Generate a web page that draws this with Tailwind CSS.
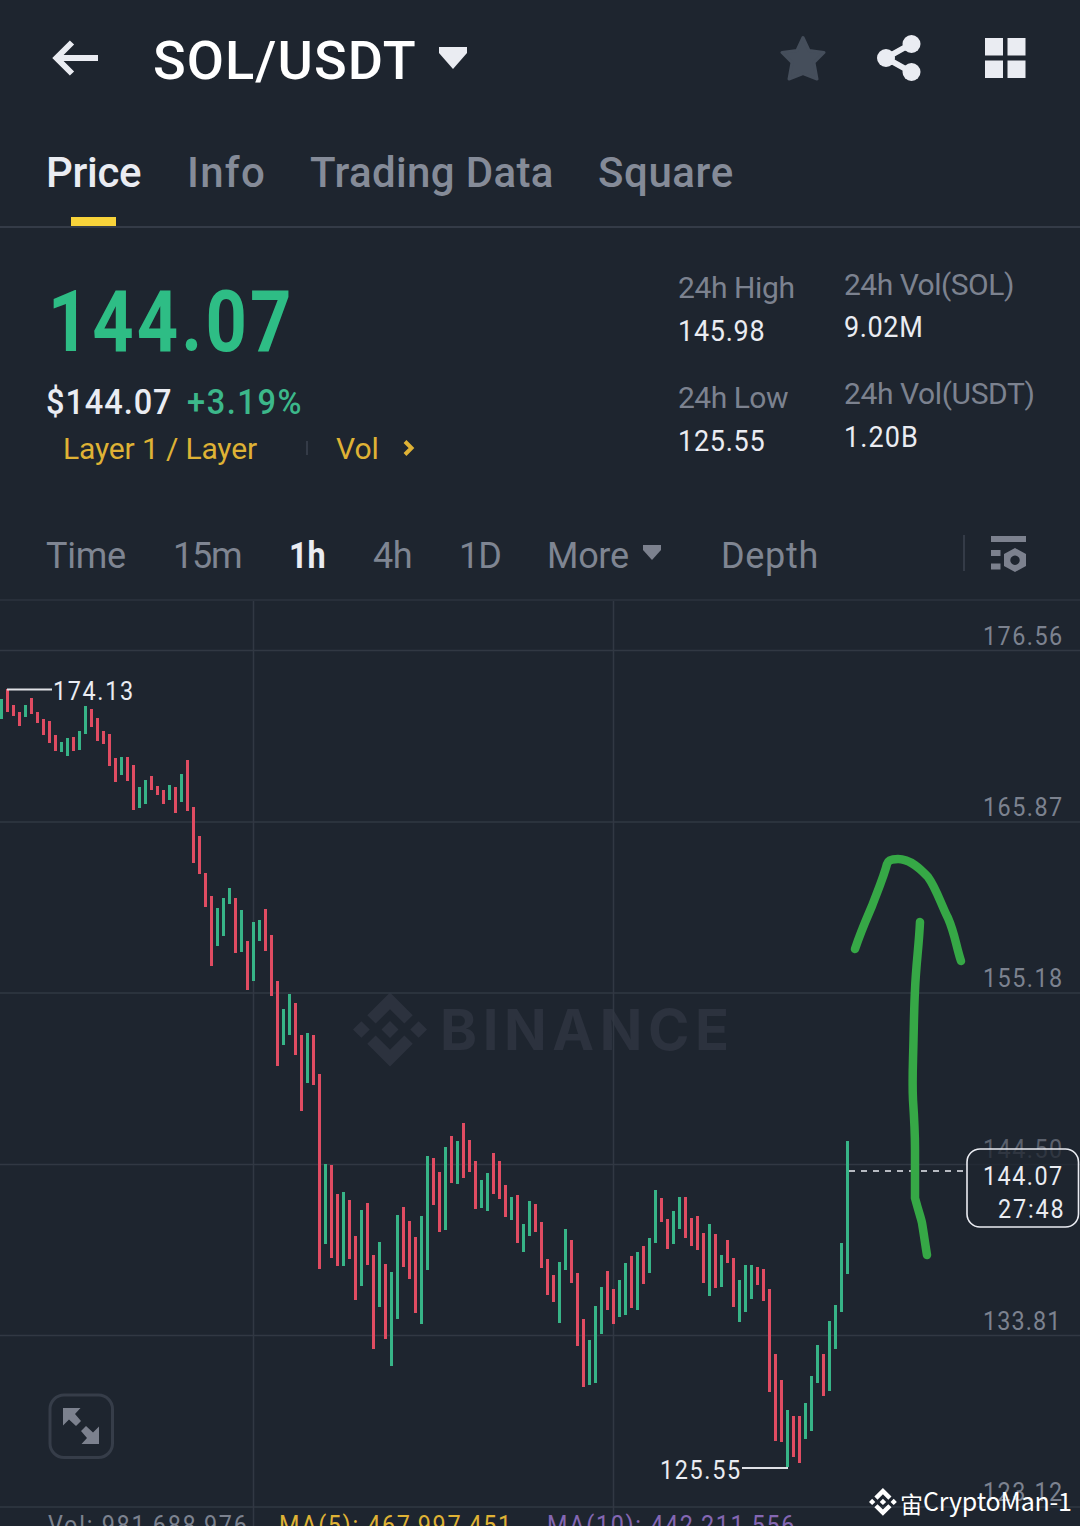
<!DOCTYPE html>
<html lang="en">
<head>
    <meta charset="UTF-8">
    <meta name="viewport" content="width=device-width, initial-scale=1.0">
    <title>SOL/USDT</title>
    <script src="https://cdn.jsdelivr.net/npm/@tailwindcss/browser@4"></script>
</head>
<body class="bg-[#1e252f] font-['Roboto','Noto_Sans_CJK_SC',sans-serif] text-[#eaecf2]">
    <div class="w-[1080px] h-[1526px] overflow-hidden flex flex-col whitespace-nowrap">
        <header class="h-[120px] shrink-0 flex items-center pb-1 pl-[52px] pr-[54px]">
            <svg class="w-[46px] h-9 shrink-0" viewBox="0 0 46 36" fill="none" stroke="#eaecf2" stroke-width="6">
                <path d="M4 18H46M20 2.5L4.500 18L20 33.500"/>
            </svg>
            <h1 class="ml-[55px] w-[286px] pt-[5px] text-[54px] leading-[60px] font-medium text-white tracking-[1.100px]">SOL/USDT</h1>
            <svg class="w-7 h-[22px] shrink-0" viewBox="0 0 28 22" fill="#eaecf2"><path d="M0 0H28V6L14 22L0 6Z"/></svg>
            <div class="ml-auto flex items-center">
                <svg class="w-[46px] h-[46px]" viewBox="0 0 46 46" fill="#454e5b" stroke="#454e5b" stroke-width="3" stroke-linejoin="round">
                    <path d="M23 2.500L29 15.500L44 17.500L34 27.500L37 44L23 38.500L9 44L12 27.500L2 17.500L17 15.500Z"/>
                </svg>
                <svg class="ml-[51px] w-11 h-[46px]" viewBox="0 0 44 46" fill="#eaecf2">
                    <path d="M34 9L9 23L34 37" fill="none" stroke="#eaecf2" stroke-width="6"/>
                    <circle cx="9" cy="23" r="9"/><circle cx="34.500" cy="9" r="9"/><circle cx="34.500" cy="37" r="9"/>
                </svg>
                <svg class="ml-16 w-[41px] h-10" viewBox="0 0 41 40" fill="#eaecf2">
                    <path d="M0 0H18V17.500H0ZM22.500 0H40.500V17.500H22.500ZM0 22.500H18V40H0ZM22.500 22.500H40.500V40H22.500Z"/>
                </svg>
            </div>
        </header>

        <nav class="h-[108px] shrink-0 flex border-b-2 border-[#343b47] pl-[46px] text-[42px] leading-[106px] font-medium text-[#858b98]">
            <div class="relative w-[141px] text-[#eaecf2] tracking-[-0.3px]">Price
                <span class="absolute left-[25px] bottom-0 w-[45px] h-[9px] bg-[#f8d33a]"></span>
            </div>
            <div class="w-[123px] tracking-[1.300px]">Info</div>
            <div class="w-[288px] tracking-[0.350px]">Trading Data</div>
            <div class="tracking-[0.600px]">Square</div>
        </nav>

        <section class="h-[282px] shrink-0 flex pl-[46px]">
            <div class="w-[632px] pt-[48px]">
                <div class="h-[92px] w-fit origin-left scale-x-[.84] text-[86px] leading-[92px] font-bold text-[#2ebd85] pl-0.5 tracking-[3.700px]">144.07</div>
                <div class="mt-[11px] h-[46px] flex text-[35px] leading-[48px] font-medium">
                    <span class="w-[141px]"><span class="inline-block origin-left scale-x-[.93] tracking-[1px]">$144.07</span></span>
                    <span class="inline-block origin-left scale-x-[.93] tracking-[1.700px] text-[#3cb88a]">+3.19%</span>
                </div>
                <div class="h-[46px] flex items-center text-[30px] text-[#dfb235] pl-[17px]">
                    <span class="w-[243px] tracking-[-0.150px]">Layer 1 / Layer</span>
                    <span class="w-0.5 h-[14px] bg-[#343b47]"></span>
                    <span class="ml-[28px] w-[67px]">Vol</span>
                    <svg class="w-3 h-4" viewBox="0 0 12 16" fill="none" stroke="#dfb235" stroke-width="4"><path d="M2 1.500L8.500 8L2 14.500"/></svg>
                </div>
            </div>
            <dl class="w-[166px] pt-[41px] text-[30px] leading-[38px]">
                <dt class="text-[#7c828f] tracking-[-0.400px]">24h High</dt>
                <dd class="mt-[5px] w-fit origin-left scale-x-90 tracking-[0.800px]">145.98</dd>
                <dt class="mt-[29px] text-[#7c828f] tracking-[-0.500px]">24h Low</dt>
                <dd class="mt-[5px] w-fit origin-left scale-x-90 tracking-[0.800px]">125.55</dd>
            </dl>
            <dl class="pt-[38px] text-[30px] leading-[38px]">
                <dt class="text-[#7c828f] tracking-[-0.500px]">24h Vol(SOL)</dt>
                <dd class="mt-[4px] w-fit origin-left scale-x-90 tracking-[0.700px]">9.02M</dd>
                <dt class="mt-[29px] text-[#7c828f] tracking-[-0.400px]">24h Vol(USDT)</dt>
                <dd class="mt-[5px] w-fit origin-left scale-x-90 tracking-[1.200px]">1.20B</dd>
            </dl>
        </section>

        <div class="h-[91px] shrink-0 flex items-center border-b-2 border-[#282f3a] pl-[46px] text-[36px] text-[#7f8592]">
            <span class="w-[127px] pt-[3px] tracking-[-0.300px]">Time</span>
            <span class="w-[116px] pt-[3px] tracking-[-1.200px]">15m</span>
            <span class="w-[84px] pt-[3px] font-bold text-[#eaecf2]"><span class="inline-block origin-left scale-x-90">1h</span></span>
            <span class="w-[86px] pt-[3px] tracking-[-0.500px]">4h</span>
            <span class="w-[88px] pt-[3px] tracking-[-1px]">1D</span>
            <span class="w-[96px] pt-[3px] tracking-[-0.300px]">More</span>
            <svg class="w-[18px] h-[15px] mb-1" viewBox="0 0 18 15" fill="#7c818e"><path d="M0 0H18V5L9 15L0 5Z"/></svg>
            <span class="ml-[60px] w-[242px] pt-[3px] tracking-[0.700px]">Depth</span>
            <span class="w-0.5 h-9 mb-1 bg-[#343b47]"></span>
            <svg class="ml-[26px] w-9 h-9 mb-0.5" viewBox="0 0 36 36" fill="#7c818e">
                <path d="M0 0H35V6H0ZM0 14H9.500V20H0ZM0 27.500H9.500V33.500H0Z"/>
                <path fill-rule="evenodd" d="M24 12L35 18V30L24 36L13 30V18ZM24 19.500a4.700 4.700 0 1 0 0.010 0Z"/>
            </svg>
        </div>

        <!-- chart, y axis runs in page coordinates -->
        <svg class="w-[1080px] h-[925px] shrink-0" viewBox="0 601 1080 925">
            <defs>
                <g id="bnb">
                    <path d="M38.730 53.200L63.310 28.620L87.900 53.210L102.200 38.910L63.310 0L24.430 38.900ZM0 63.310L14.300 49.010L28.600 63.310L14.300 77.610ZM38.730 73.410L63.310 98L87.900 73.400L102.210 87.690L63.310 126.610L24.420 87.710ZM98 63.310L112.300 49.010L126.600 63.310L112.300 77.610ZM63.310 48.790L77.830 63.300L63.310 77.830L48.800 63.300Z"/>
                </g>
            </defs>
            <g fill="#2c323e">
                <use href="#bnb" transform="translate(353 992.500) scale(.5845)"/>
                <text x="440" y="1050" font-family="Inter" font-weight="700" font-size="56" textLength="289">BINANCE</text>
            </g>
            <path d="M0 650.500H1080M0 822H1080M0 993H1080M0 1164.500H1080M0 1335.500H1080M0 1507H1080M253.500 601V1526M613.500 601V1526" stroke="#313843" stroke-width="1.500"/>
            <!-- narrow figures: drawn at 90% width and spaced out -->
            <g font-size="26" fill="#7c828f">
                <text transform="translate(983 645) scale(.9 1)" textLength="88">176.56</text>
                <text transform="translate(983 816) scale(.9 1)" textLength="88">165.87</text>
                <text transform="translate(983 987) scale(.9 1)" textLength="88">155.18</text>
                <text transform="translate(983 1158) scale(.9 1)" textLength="88" fill="#5a606c">144.50</text>
                <text transform="translate(983 1330) scale(.9 1)" textLength="86">133.81</text>
                <text transform="translate(983 1501) scale(.9 1)" textLength="88">123.12</text>
            </g>
            <g id="candles"></g>
            <g font-size="26" fill="#eaecf2">
                <path d="M7 689.500H52M742 1468H788" stroke="#dfe1e6" stroke-width="1.800"/>
                <text transform="translate(53 700) scale(.9 1)" textLength="89">174.13</text>
                <text transform="translate(660 1479) scale(.9 1)" textLength="89">125.55</text>
            </g>
            <path d="M849 1171H966" stroke="#eaecf2" stroke-width="1.600" stroke-dasharray="6 6"/>
            <rect x="967" y="1149" width="111.500" height="78" rx="13" fill="#1e252f" fill-opacity=".7" stroke="#eaecf2" stroke-width="1.600"/>
            <g font-size="26" fill="#eaecf2">
                <text transform="translate(983 1185) scale(.9 1)" textLength="88">144.07</text>
                <text transform="translate(998 1218) scale(.9 1)" textLength="73">27:48</text>
            </g>
            <g fill="none" stroke="#36a846" stroke-width="8.500" stroke-linecap="round" stroke-linejoin="round">
                <path d="M855 949C861 931 866 920 872 906C878 890 884 876 887 864C888 860 893 859 898 859C912 859 923 872 928 877C936 888 941 904 948 918C955 934 956 946 961 961"/>
                <path d="M920 922C919 945 916 965 915 990C914 1010 914 1020 913.500 1040C913 1065 912 1080 913 1100C914 1115 915 1130 915 1150V1198C919 1213 921 1218 922 1223C924 1235 925 1243 927 1255"/>
            </g>
            <rect x="50" y="1395" width="62.500" height="62.500" rx="14" fill="none" stroke="#363d49" stroke-width="3"/>
            <path d="M63 1408H80.500L75 1414L81 1421L76 1426L69 1419.500L63 1425.500ZM99 1444H81.500L87 1438L81 1431L86 1426L93 1432.500L99 1426.500Z" fill="#7c818e"/>
            <g font-size="26">
                <text transform="translate(48 1534) scale(.9 1)" textLength="221" fill="#7c828f">Vol: 981,688,976</text>
                <text transform="translate(279 1534) scale(.9 1)" textLength="258" fill="#dfb235">MA(5): 467,997,451</text>
                <text transform="translate(547 1534) scale(.9 1)" textLength="275" fill="#8467b3">MA(10): 442,211,556</text>
            </g>
            <g fill="#fff">
                <use href="#bnb" transform="translate(869 1488) scale(.22)"/>
                <text x="900" y="1513" font-family="Noto Sans CJK SC" font-size="23">宙</text>
                <text x="923" y="1511" font-family="Noto Sans CJK SC" font-size="25" textLength="149">CryptoMan-1</text>
            </g>
        </svg>
    </div>

    <script>
        // direction, high, low; one bar every 6px
        var bars = 'G699-719 R689-712 R705-716 R712-726 G705-717 R698-714 R712-723 R719-735 R721-743 R735-751 G742-752 G738-756 R737-751 G731-750 G706-734 R709-727 R718-741 R731-744 R734-766 R758-782 G757-775 R757-781 R765-810 G787-808 G780-804 R776-790 R786-795 R790-804 G785-800 R787-813 G774-802 R760-811 R807-863 R836-874 R873-907 ' +
            'R896-966 G908-946 G898-936 G888-904 R898-953 G910-952 R941-990 G922-981 G920-941 R909-951 R935-996 R981-1066 G1009-1045 G994-1035 R1003-1055 R1035-1111 G1033-1083 R1035-1085 R1074-1269 G1164-1244 R1165-1258 R1194-1266 G1192-1266 R1200-1259 ' +
            'R1236-1300 G1210-1286 R1203-1265 R1255-1349 G1242-1307 R1264-1339 G1272-1366 G1215-1319 R1207-1267 R1221-1279 R1237-1313 G1216-1324 G1156-1270 R1158-1205 R1172-1232 G1147-1230 R1136-1183 G1141-1184 R1123-1178 R1140-1172 R1161-1209 G1180-1208 G1173-1211 R1153-1194 R1161-1199 R1185-1217 G1197-1220 R1195-1243 G1224-1252 ' +
            'G1201-1236 R1204-1232 R1222-1268 R1259-1295 R1275-1302 G1262-1323 G1229-1270 R1240-1283 R1273-1346 R1319-1387 G1340-1385 G1306-1383 G1287-1334 R1271-1310 R1289-1324 G1280-1317 G1263-1315 R1256-1308 G1252-1310 R1246-1284 G1238-1273 G1190-1243 R1198-1222 R1219-1249 ' +
            'G1211-1244 G1197-1229 R1197-1238 R1218-1246 R1216-1250 R1233-1283 G1224-1296 R1234-1288 G1255-1287 R1240-1263 R1258-1307 G1280-1322 G1265-1312 G1265-1299 R1267-1285 R1269-1301 R1289-1392 R1354-1441 R1380-1442 G1410-1467 R1416-1457 R1416-1463 G1403-1439 G1376-1431 G1345-1383 R1354-1396 G1321-1391 G1305-1349 G1243-1312 G1141-1274';
        document.getElementById('candles').innerHTML = bars.split(' ').map(function (bar, i) {
            var y = bar.slice(1).split('-').map(Number);
            var color = bar[0] === 'G' ? '#37b487' : '#e04c62';
            return '<rect x="' + i * 6 + '" y="' + y[0] + '" width="3" height="' + (y[1] - y[0]) + '" fill="' + color + '"/>';
        }).join('');
    </script>
</body>
</html>
